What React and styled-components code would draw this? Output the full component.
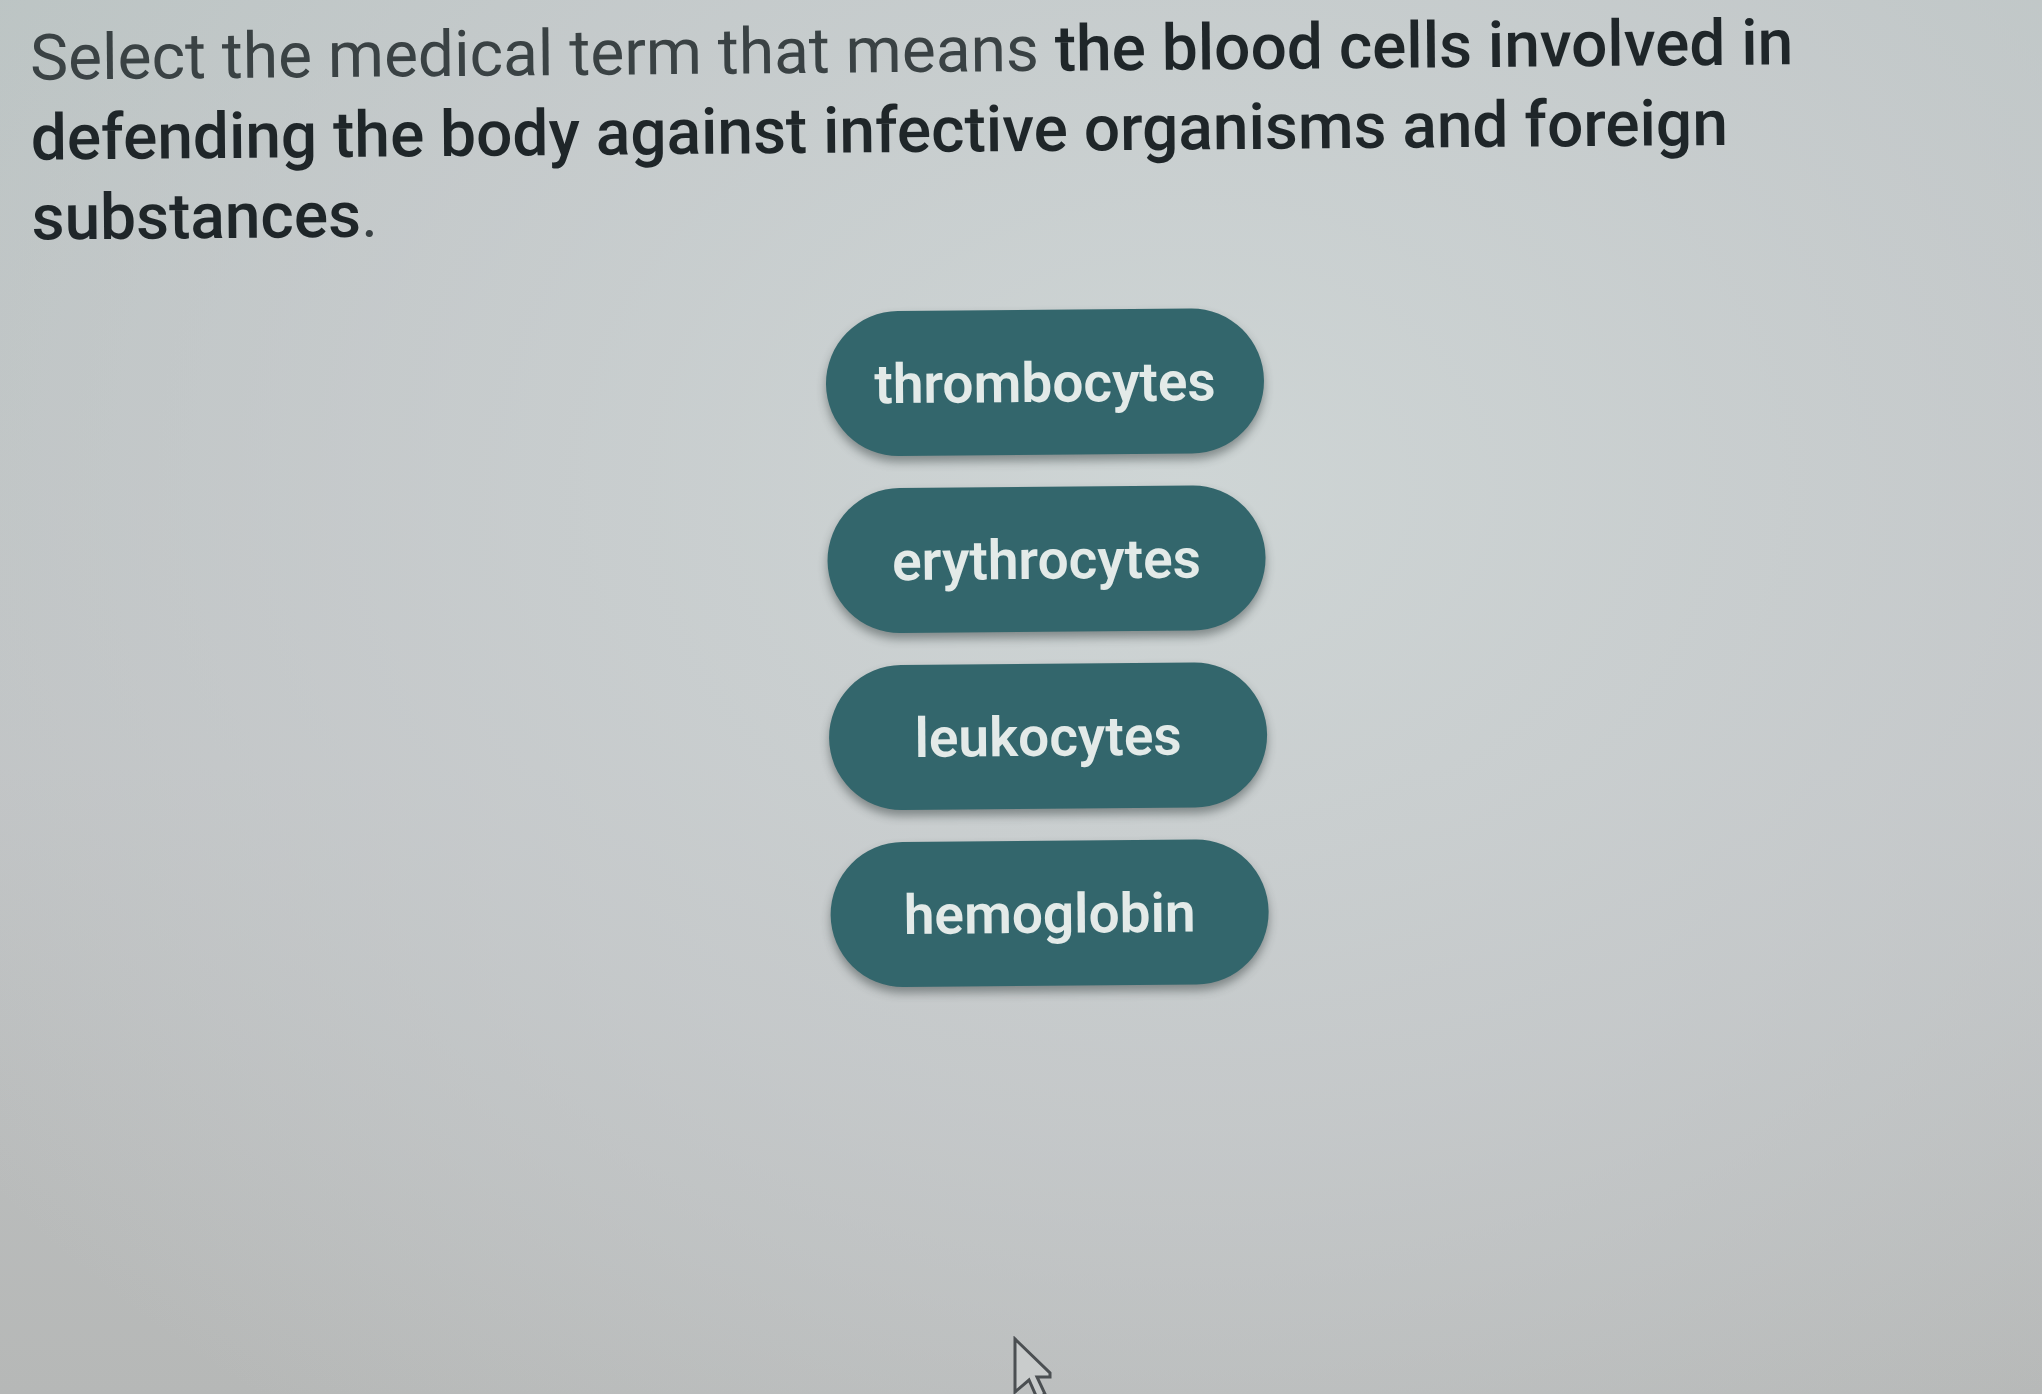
import React, { useState } from "react";
import styled, { createGlobalStyle } from "styled-components";

const GlobalStyle = createGlobalStyle`
  * {
    box-sizing: border-box;
  }

  body {
    margin: 0;
    font-family: Roboto, "Liberation Sans", sans-serif;
  }
`;

const Page = styled.main`
  position: relative;
  min-height: 100vh;
  overflow: hidden;
  padding: 10px 34px;
  background: radial-gradient(
      ellipse at 58% 35%,
      rgba(208, 215, 215, 0.9) 0%,
      rgba(201, 205, 207, 0.7) 50%,
      rgba(188, 192, 191, 0) 90%
    ),
    linear-gradient(180deg, #bac3c2 0%, #bfc2c3 55%, #b6b8b7 100%);
`;

const Exercise = styled.form`
  display: flex;
  flex-direction: column;
  gap: 60px;
  transform: rotate(-0.5deg);
`;

const Prompt = styled.h1`
  margin: 0;
  max-width: 1800px;
  font-size: 64px;
  line-height: 80px;
  font-weight: 400;
  color: #3a4244;
`;

const Term = styled.strong`
  font-weight: 500;
  color: #1f2629;
`;

const Answers = styled.div`
  display: flex;
  flex-direction: column;
  align-items: center;
  gap: 32px;
  padding-left: 50px;
`;

const Answer = styled.button`
  width: 438px;
  height: 145px;
  border: none;
  border-radius: 73px;
  background: #33666c;
  box-shadow: 0 6px 10px rgba(40, 50, 50, 0.45);
  color: #e3eae8;
  font-family: inherit;
  font-size: 55px;
  line-height: 80px;
  font-weight: 600;
  cursor: pointer;
`;

const Pointer = styled.svg`
  position: absolute;
  left: 1012px;
  top: 1336px;
  width: 42px;
  height: 64px;
  pointer-events: none;
`;

const options = ["thrombocytes", "erythrocytes", "leukocytes", "hemoglobin"];

const App = () => {
  const [selected, setSelected] = useState(null);

  return (
    <>
      <GlobalStyle />
      <Page>
        <Exercise>
          <Prompt>
            Select the medical term that means{" "}
            <Term>
              the blood cells involved in defending the body against infective
              organisms and foreign substances
            </Term>
            .
          </Prompt>
          <Answers>
            {options.map((option) => (
              <Answer
                key={option}
                type="button"
                aria-pressed={selected === option}
                onClick={() => setSelected(option)}
              >
                {option}
              </Answer>
            ))}
          </Answers>
        </Exercise>
        <Pointer viewBox="0 0 42 64" aria-hidden="true">
          <path
            d="M3 3V56L17 44L25 62L33 58L25 41H38V37Z"
            fill="#c9cccc"
            stroke="#4b4f52"
            strokeWidth="3"
          />
        </Pointer>
      </Page>
    </>
  );
};

export default App;
